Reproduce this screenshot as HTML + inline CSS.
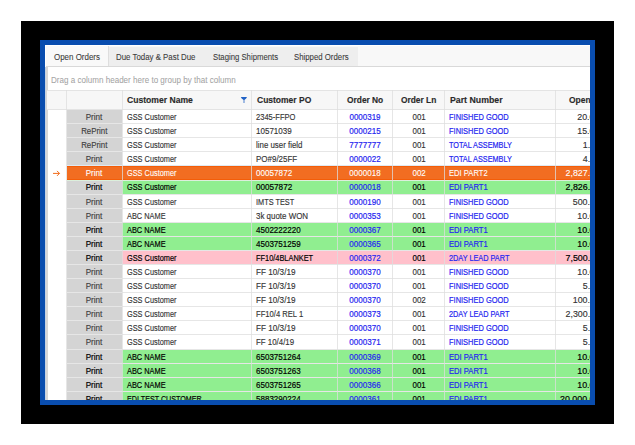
<!DOCTYPE html>
<html><head><meta charset="utf-8"><style>
*{margin:0;padding:0;box-sizing:border-box}
html,body{width:635px;height:445px;background:#fff;overflow:hidden}
body{position:relative;font-family:"Liberation Sans",sans-serif}
#blk{position:absolute;left:21px;top:21px;width:593px;height:403px;background:#000}
#blu{position:absolute;left:40px;top:40px;width:555px;height:365px;background:#094daf}
#ct{position:absolute;left:45px;top:45px;width:545px;height:355px;background:#fff;overflow:hidden}
.a{position:absolute}
.t{position:absolute;white-space:nowrap;font-size:9.75px;line-height:10px}
.s{display:inline-block;transform-origin:0 8px}
.c .s{transform-origin:50% 8px}
.r .s{transform-origin:100% 8px}
.hd{font-weight:bold}
</style></head>
<body><div id="blk"></div><div id="blu"></div><div id="ct">
<div class="a" style="left:1px;top:1px;width:600px;height:20px;background:#f8f8f8"></div>
<div class="a" style="left:1px;top:1px;width:62px;height:20px;background:#f9f9f9"></div>
<div class="a" style="left:63px;top:1px;width:1px;height:20px;background:#dedede"></div>
<div class="a" style="left:64px;top:2px;width:249px;height:19px;background:#eeeeee"></div>
<div class="a" style="left:1px;top:21px;width:600px;height:1px;background:#d9d9d9"></div>
<div class="t " style="left:9px;top:6.5px;color:#3c3c3c;-webkit-text-stroke:0.1px currentColor;"><span class="s" style="transform:scale(0.815,1)">Open Orders</span></div>
<div class="t " style="left:71px;top:6.5px;color:#3c3c3c;-webkit-text-stroke:0.1px currentColor;"><span class="s" style="transform:scale(0.807,1)">Due Today &amp; Past Due</span></div>
<div class="t " style="left:167.5px;top:6.5px;color:#3c3c3c;-webkit-text-stroke:0.1px currentColor;"><span class="s" style="transform:scale(0.795,1)">Staging Shipments</span></div>
<div class="t " style="left:249px;top:6.5px;color:#3c3c3c;-webkit-text-stroke:0.1px currentColor;"><span class="s" style="transform:scale(0.800,1)">Shipped Orders</span></div>
<div class="a" style="left:0px;top:22px;width:1px;height:340px;background:#c4d2e4"></div>
<div class="a" style="left:1px;top:22px;width:2px;height:340px;background:#d6d6d6"></div>
<div class="t " style="left:6px;top:29.5px;color:#a4a4a4;-webkit-text-stroke:0.05px currentColor;"><span class="s" style="transform:scale(0.827,1)">Drag a column header here to group by that column</span></div>
<div class="a" style="left:2px;top:45px;width:600px;height:1px;background:#e4e4e4"></div>
<div class="a" style="left:2px;top:46px;width:600px;height:18px;background:#f7f7f7"></div>
<div class="a" style="left:2px;top:64px;width:600px;height:1px;background:#e4e4e4"></div>
<div class="t hd" style="left:82px;top:50px;color:#2a2a2a;-webkit-text-stroke:0.15px currentColor;"><span class="s" style="transform:scale(0.881,1)">Customer Name</span></div>
<div class="t hd" style="left:211.5px;top:50px;color:#2a2a2a;-webkit-text-stroke:0.15px currentColor;"><span class="s" style="transform:scale(0.871,1)">Customer PO</span></div>
<div class="t c hd" style="left:293px;top:50px;width:55px;text-align:center;color:#2a2a2a;-webkit-text-stroke:0.15px currentColor;"><span class="s" style="transform:scale(0.856,1)">Order No</span></div>
<div class="t c hd" style="left:348px;top:50px;width:52px;text-align:center;color:#2a2a2a;-webkit-text-stroke:0.15px currentColor;"><span class="s" style="transform:scale(0.860,1)">Order Ln</span></div>
<div class="t hd" style="left:404.5px;top:50px;color:#2a2a2a;-webkit-text-stroke:0.15px currentColor;"><span class="s" style="transform:scale(0.898,1)">Part Number</span></div>
<div class="t hd" style="left:524px;top:50px;color:#2a2a2a;-webkit-text-stroke:0.15px currentColor;"><span class="s" style="transform:scale(0.868,1)">Open Qty</span></div>
<svg class="a" style="left:195px;top:51px" width="8" height="8" viewBox="0 0 8 8"><path d="M0.8 1 H7 Q6.6 2.6 4.4 3.9 V7 H3.6 V3.9 Q1.2 2.6 0.8 1 Z" fill="#2263c6"/></svg>
<div class="a" style="left:22px;top:65px;width:55px;height:13px;background:#d4d4d4"></div>
<div class="a" style="left:22px;top:78px;width:600px;height:1px;background:#e6e6e6"></div>
<div class="t c " style="left:22px;top:66.5px;width:55px;text-align:center;color:#3c3c3c;-webkit-text-stroke:0.15px currentColor;"><span class="s" style="transform:scale(0.829,1)">Print</span></div>
<div class="t " style="left:82px;top:66.5px;color:#333333;-webkit-text-stroke:0.15px currentColor;"><span class="s" style="transform:scale(0.754,1)">GSS Customer</span></div>
<div class="t " style="left:210.8px;top:66.5px;color:#333333;-webkit-text-stroke:0.15px currentColor;"><span class="s" style="transform:scale(0.774,1)">2345-FFPO</span></div>
<div class="t c " style="left:292px;top:66.5px;width:55px;text-align:center;color:#2626f0;-webkit-text-stroke:0.22px currentColor;"><span class="s" style="transform:scale(0.817,1)">0000319</span></div>
<div class="t c " style="left:348px;top:66.5px;width:52px;text-align:center;color:#333333;-webkit-text-stroke:0.15px currentColor;"><span class="s" style="transform:scale(0.810,1)">001</span></div>
<div class="t " style="left:403.7px;top:66.5px;color:#2626f0;-webkit-text-stroke:0.22px currentColor;"><span class="s" style="transform:scale(0.766,1)">FINISHED GOOD</span></div>
<div class="t r val" style="left:494.5px;top:66.5px;width:60px;text-align:right;color:#333333;-webkit-text-stroke:0.15px currentColor;"><span class="s" style="transform:scale(0.907,1)">20.00</span></div>
<div class="a" style="left:22px;top:79px;width:55px;height:13px;background:#d4d4d4"></div>
<div class="a" style="left:22px;top:92px;width:600px;height:1px;background:#e6e6e6"></div>
<div class="t c " style="left:22px;top:80.5px;width:55px;text-align:center;color:#3c3c3c;-webkit-text-stroke:0.15px currentColor;"><span class="s" style="transform:scale(0.807,1)">RePrint</span></div>
<div class="t " style="left:82px;top:80.5px;color:#333333;-webkit-text-stroke:0.15px currentColor;"><span class="s" style="transform:scale(0.754,1)">GSS Customer</span></div>
<div class="t " style="left:210.8px;top:80.5px;color:#333333;-webkit-text-stroke:0.15px currentColor;"><span class="s" style="transform:scale(0.824,1)">10571039</span></div>
<div class="t c " style="left:292px;top:80.5px;width:55px;text-align:center;color:#2626f0;-webkit-text-stroke:0.22px currentColor;"><span class="s" style="transform:scale(0.824,1)">0000215</span></div>
<div class="t c " style="left:348px;top:80.5px;width:52px;text-align:center;color:#333333;-webkit-text-stroke:0.15px currentColor;"><span class="s" style="transform:scale(0.810,1)">001</span></div>
<div class="t " style="left:403.7px;top:80.5px;color:#2626f0;-webkit-text-stroke:0.22px currentColor;"><span class="s" style="transform:scale(0.766,1)">FINISHED GOOD</span></div>
<div class="t r val" style="left:494.5px;top:80.5px;width:60px;text-align:right;color:#333333;-webkit-text-stroke:0.15px currentColor;"><span class="s" style="transform:scale(0.907,1)">15.00</span></div>
<div class="a" style="left:22px;top:93px;width:55px;height:13px;background:#d4d4d4"></div>
<div class="a" style="left:22px;top:106px;width:600px;height:1px;background:#e6e6e6"></div>
<div class="t c " style="left:22px;top:94.5px;width:55px;text-align:center;color:#3c3c3c;-webkit-text-stroke:0.15px currentColor;"><span class="s" style="transform:scale(0.807,1)">RePrint</span></div>
<div class="t " style="left:82px;top:94.5px;color:#333333;-webkit-text-stroke:0.15px currentColor;"><span class="s" style="transform:scale(0.754,1)">GSS Customer</span></div>
<div class="t " style="left:210.8px;top:94.5px;color:#333333;-webkit-text-stroke:0.15px currentColor;"><span class="s" style="transform:scale(0.808,1)">line user field</span></div>
<div class="t c " style="left:292px;top:94.5px;width:55px;text-align:center;color:#2626f0;-webkit-text-stroke:0.22px currentColor;"><span class="s" style="transform:scale(0.824,1)">7777777</span></div>
<div class="t c " style="left:348px;top:94.5px;width:52px;text-align:center;color:#333333;-webkit-text-stroke:0.15px currentColor;"><span class="s" style="transform:scale(0.810,1)">001</span></div>
<div class="t " style="left:403.7px;top:94.5px;color:#2626f0;-webkit-text-stroke:0.22px currentColor;"><span class="s" style="transform:scale(0.746,1)">TOTAL ASSEMBLY</span></div>
<div class="t r val" style="left:494.5px;top:94.5px;width:60px;text-align:right;color:#333333;-webkit-text-stroke:0.15px currentColor;"><span class="s" style="transform:scale(0.907,1)">1.00</span></div>
<div class="a" style="left:22px;top:107px;width:55px;height:13px;background:#d4d4d4"></div>
<div class="a" style="left:22px;top:120px;width:600px;height:1px;background:#e6e6e6"></div>
<div class="t c " style="left:22px;top:108.5px;width:55px;text-align:center;color:#3c3c3c;-webkit-text-stroke:0.15px currentColor;"><span class="s" style="transform:scale(0.829,1)">Print</span></div>
<div class="t " style="left:82px;top:108.5px;color:#333333;-webkit-text-stroke:0.15px currentColor;"><span class="s" style="transform:scale(0.754,1)">GSS Customer</span></div>
<div class="t " style="left:210.8px;top:108.5px;color:#333333;-webkit-text-stroke:0.15px currentColor;"><span class="s" style="transform:scale(0.818,1)">PO#9/25FF</span></div>
<div class="t c " style="left:292px;top:108.5px;width:55px;text-align:center;color:#2626f0;-webkit-text-stroke:0.22px currentColor;"><span class="s" style="transform:scale(0.824,1)">0000022</span></div>
<div class="t c " style="left:348px;top:108.5px;width:52px;text-align:center;color:#333333;-webkit-text-stroke:0.15px currentColor;"><span class="s" style="transform:scale(0.810,1)">001</span></div>
<div class="t " style="left:403.7px;top:108.5px;color:#2626f0;-webkit-text-stroke:0.22px currentColor;"><span class="s" style="transform:scale(0.746,1)">TOTAL ASSEMBLY</span></div>
<div class="t r val" style="left:494.5px;top:108.5px;width:60px;text-align:right;color:#333333;-webkit-text-stroke:0.15px currentColor;"><span class="s" style="transform:scale(0.907,1)">4.00</span></div>
<div class="a" style="left:22px;top:121px;width:55px;height:13px;background:#f26d21"></div>
<div class="a" style="left:77px;top:121px;width:500px;height:13px;background:#f26d21"></div>
<div class="a" style="left:22px;top:134px;width:600px;height:1px;background:#e6e6e6"></div>
<div class="t c " style="left:22px;top:122.5px;width:55px;text-align:center;color:#ffffff;-webkit-text-stroke:0.1px currentColor;"><span class="s" style="transform:scale(0.829,1)">Print</span></div>
<div class="t " style="left:82px;top:122.5px;color:#ffffff;-webkit-text-stroke:0.1px currentColor;"><span class="s" style="transform:scale(0.754,1)">GSS Customer</span></div>
<div class="t " style="left:210.8px;top:122.5px;color:#ffffff;-webkit-text-stroke:0.1px currentColor;"><span class="s" style="transform:scale(0.834,1)">00057872</span></div>
<div class="t c " style="left:292px;top:122.5px;width:55px;text-align:center;color:#ffffff;-webkit-text-stroke:0.1px currentColor;"><span class="s" style="transform:scale(0.824,1)">0000018</span></div>
<div class="t c " style="left:348px;top:122.5px;width:52px;text-align:center;color:#ffffff;-webkit-text-stroke:0.1px currentColor;"><span class="s" style="transform:scale(0.824,1)">002</span></div>
<div class="t " style="left:403.7px;top:122.5px;color:#ffffff;-webkit-text-stroke:0.1px currentColor;"><span class="s" style="transform:scale(0.782,1)">EDI PART2</span></div>
<div class="t r val" style="left:494.5px;top:122.5px;width:60px;text-align:right;color:#ffffff;-webkit-text-stroke:0.1px currentColor;"><span class="s" style="transform:scale(0.907,1)">2,827.00</span></div>
<div class="a" style="left:22px;top:121px;width:600px;height:1px;background:#f45d08"></div>
<div class="a" style="left:22px;top:134px;width:600px;height:1px;background:#f45d08"></div>
<div class="a" style="left:22px;top:120px;width:600px;height:1px;background:#dfeaf3"></div>
<div class="a" style="left:22px;top:135px;width:600px;height:1px;background:#dcefdc"></div>
<svg class="a" style="left:7px;top:124px" width="9" height="8" viewBox="0 0 9 8"><path d="M1 4.4 H7.5 M5 1.9 L7.5 4.4 L5 6.9" stroke="#f0640f" stroke-width="0.95" fill="none"/></svg>
<div class="a" style="left:22px;top:136px;width:55px;height:13px;background:#d4d4d4"></div>
<div class="a" style="left:77px;top:136px;width:500px;height:13px;background:#90ee90"></div>
<div class="a" style="left:22px;top:149px;width:600px;height:1px;background:#e6e6e6"></div>
<div class="t c " style="left:22px;top:136.5px;width:55px;text-align:center;color:#000000;-webkit-text-stroke:0.2px currentColor;"><span class="s" style="transform:scale(0.829,1)">Print</span></div>
<div class="t " style="left:82px;top:136.5px;color:#000000;-webkit-text-stroke:0.2px currentColor;"><span class="s" style="transform:scale(0.754,1)">GSS Customer</span></div>
<div class="t " style="left:210.8px;top:136.5px;color:#000000;-webkit-text-stroke:0.2px currentColor;"><span class="s" style="transform:scale(0.834,1)">00057872</span></div>
<div class="t c " style="left:292px;top:136.5px;width:55px;text-align:center;color:#2626f0;-webkit-text-stroke:0.22px currentColor;"><span class="s" style="transform:scale(0.824,1)">0000018</span></div>
<div class="t c " style="left:348px;top:136.5px;width:52px;text-align:center;color:#000000;-webkit-text-stroke:0.2px currentColor;"><span class="s" style="transform:scale(0.810,1)">001</span></div>
<div class="t " style="left:403.7px;top:136.5px;color:#2626f0;-webkit-text-stroke:0.22px currentColor;"><span class="s" style="transform:scale(0.782,1)">EDI PART1</span></div>
<div class="t r val" style="left:494.5px;top:136.5px;width:60px;text-align:right;color:#000000;-webkit-text-stroke:0.2px currentColor;"><span class="s" style="transform:scale(0.907,1)">2,826.00</span></div>
<div class="a" style="left:22px;top:150px;width:55px;height:13px;background:#d4d4d4"></div>
<div class="a" style="left:22px;top:163px;width:600px;height:1px;background:#e6e6e6"></div>
<div class="t c " style="left:22px;top:151.5px;width:55px;text-align:center;color:#3c3c3c;-webkit-text-stroke:0.15px currentColor;"><span class="s" style="transform:scale(0.829,1)">Print</span></div>
<div class="t " style="left:82px;top:151.5px;color:#333333;-webkit-text-stroke:0.15px currentColor;"><span class="s" style="transform:scale(0.754,1)">GSS Customer</span></div>
<div class="t " style="left:210.8px;top:151.5px;color:#333333;-webkit-text-stroke:0.15px currentColor;"><span class="s" style="transform:scale(0.754,1)">IMTS TEST</span></div>
<div class="t c " style="left:292px;top:151.5px;width:55px;text-align:center;color:#2626f0;-webkit-text-stroke:0.22px currentColor;"><span class="s" style="transform:scale(0.824,1)">0000190</span></div>
<div class="t c " style="left:348px;top:151.5px;width:52px;text-align:center;color:#333333;-webkit-text-stroke:0.15px currentColor;"><span class="s" style="transform:scale(0.810,1)">001</span></div>
<div class="t " style="left:403.7px;top:151.5px;color:#2626f0;-webkit-text-stroke:0.22px currentColor;"><span class="s" style="transform:scale(0.766,1)">FINISHED GOOD</span></div>
<div class="t r val" style="left:494.5px;top:151.5px;width:60px;text-align:right;color:#333333;-webkit-text-stroke:0.15px currentColor;"><span class="s" style="transform:scale(0.907,1)">500.00</span></div>
<div class="a" style="left:22px;top:164px;width:55px;height:13px;background:#d4d4d4"></div>
<div class="a" style="left:22px;top:177px;width:600px;height:1px;background:#e6e6e6"></div>
<div class="t c " style="left:22px;top:165.5px;width:55px;text-align:center;color:#3c3c3c;-webkit-text-stroke:0.15px currentColor;"><span class="s" style="transform:scale(0.829,1)">Print</span></div>
<div class="t " style="left:82px;top:165.5px;color:#333333;-webkit-text-stroke:0.15px currentColor;"><span class="s" style="transform:scale(0.757,1)">ABC NAME</span></div>
<div class="t " style="left:210.8px;top:165.5px;color:#333333;-webkit-text-stroke:0.15px currentColor;"><span class="s" style="transform:scale(0.814,1)">3k quote WON</span></div>
<div class="t c " style="left:292px;top:165.5px;width:55px;text-align:center;color:#2626f0;-webkit-text-stroke:0.22px currentColor;"><span class="s" style="transform:scale(0.824,1)">0000353</span></div>
<div class="t c " style="left:348px;top:165.5px;width:52px;text-align:center;color:#333333;-webkit-text-stroke:0.15px currentColor;"><span class="s" style="transform:scale(0.810,1)">001</span></div>
<div class="t " style="left:403.7px;top:165.5px;color:#2626f0;-webkit-text-stroke:0.22px currentColor;"><span class="s" style="transform:scale(0.766,1)">FINISHED GOOD</span></div>
<div class="t r val" style="left:494.5px;top:165.5px;width:60px;text-align:right;color:#333333;-webkit-text-stroke:0.15px currentColor;"><span class="s" style="transform:scale(0.907,1)">10.00</span></div>
<div class="a" style="left:22px;top:178px;width:55px;height:13px;background:#d4d4d4"></div>
<div class="a" style="left:77px;top:178px;width:500px;height:13px;background:#90ee90"></div>
<div class="a" style="left:22px;top:191px;width:600px;height:1px;background:#e6e6e6"></div>
<div class="t c " style="left:22px;top:179.5px;width:55px;text-align:center;color:#000000;-webkit-text-stroke:0.2px currentColor;"><span class="s" style="transform:scale(0.829,1)">Print</span></div>
<div class="t " style="left:82px;top:179.5px;color:#000000;-webkit-text-stroke:0.2px currentColor;"><span class="s" style="transform:scale(0.757,1)">ABC NAME</span></div>
<div class="t " style="left:210.8px;top:179.5px;color:#000000;-webkit-text-stroke:0.2px currentColor;"><span class="s" style="transform:scale(0.824,1)">4502222220</span></div>
<div class="t c " style="left:292px;top:179.5px;width:55px;text-align:center;color:#2626f0;-webkit-text-stroke:0.22px currentColor;"><span class="s" style="transform:scale(0.824,1)">0000367</span></div>
<div class="t c " style="left:348px;top:179.5px;width:52px;text-align:center;color:#000000;-webkit-text-stroke:0.2px currentColor;"><span class="s" style="transform:scale(0.810,1)">001</span></div>
<div class="t " style="left:403.7px;top:179.5px;color:#2626f0;-webkit-text-stroke:0.22px currentColor;"><span class="s" style="transform:scale(0.782,1)">EDI PART1</span></div>
<div class="t r val" style="left:494.5px;top:179.5px;width:60px;text-align:right;color:#000000;-webkit-text-stroke:0.2px currentColor;"><span class="s" style="transform:scale(0.907,1)">10.00</span></div>
<div class="a" style="left:22px;top:192px;width:55px;height:13px;background:#d4d4d4"></div>
<div class="a" style="left:77px;top:192px;width:500px;height:13px;background:#90ee90"></div>
<div class="a" style="left:22px;top:205px;width:600px;height:1px;background:#e6e6e6"></div>
<div class="t c " style="left:22px;top:193.5px;width:55px;text-align:center;color:#000000;-webkit-text-stroke:0.2px currentColor;"><span class="s" style="transform:scale(0.829,1)">Print</span></div>
<div class="t " style="left:82px;top:193.5px;color:#000000;-webkit-text-stroke:0.2px currentColor;"><span class="s" style="transform:scale(0.757,1)">ABC NAME</span></div>
<div class="t " style="left:210.8px;top:193.5px;color:#000000;-webkit-text-stroke:0.2px currentColor;"><span class="s" style="transform:scale(0.824,1)">4503751259</span></div>
<div class="t c " style="left:292px;top:193.5px;width:55px;text-align:center;color:#2626f0;-webkit-text-stroke:0.22px currentColor;"><span class="s" style="transform:scale(0.824,1)">0000365</span></div>
<div class="t c " style="left:348px;top:193.5px;width:52px;text-align:center;color:#000000;-webkit-text-stroke:0.2px currentColor;"><span class="s" style="transform:scale(0.810,1)">001</span></div>
<div class="t " style="left:403.7px;top:193.5px;color:#2626f0;-webkit-text-stroke:0.22px currentColor;"><span class="s" style="transform:scale(0.782,1)">EDI PART1</span></div>
<div class="t r val" style="left:494.5px;top:193.5px;width:60px;text-align:right;color:#000000;-webkit-text-stroke:0.2px currentColor;"><span class="s" style="transform:scale(0.907,1)">10.00</span></div>
<div class="a" style="left:22px;top:206px;width:55px;height:13px;background:#d4d4d4"></div>
<div class="a" style="left:77px;top:206px;width:500px;height:13px;background:#ffc0cb"></div>
<div class="a" style="left:22px;top:219px;width:600px;height:1px;background:#e6e6e6"></div>
<div class="t c " style="left:22px;top:207.5px;width:55px;text-align:center;color:#000000;-webkit-text-stroke:0.2px currentColor;"><span class="s" style="transform:scale(0.829,1)">Print</span></div>
<div class="t " style="left:82px;top:207.5px;color:#000000;-webkit-text-stroke:0.2px currentColor;"><span class="s" style="transform:scale(0.754,1)">GSS Customer</span></div>
<div class="t " style="left:210.8px;top:207.5px;color:#000000;-webkit-text-stroke:0.2px currentColor;"><span class="s" style="transform:scale(0.758,1)">FF10/4BLANKET</span></div>
<div class="t c " style="left:292px;top:207.5px;width:55px;text-align:center;color:#2626f0;-webkit-text-stroke:0.22px currentColor;"><span class="s" style="transform:scale(0.824,1)">0000372</span></div>
<div class="t c " style="left:348px;top:207.5px;width:52px;text-align:center;color:#000000;-webkit-text-stroke:0.2px currentColor;"><span class="s" style="transform:scale(0.810,1)">001</span></div>
<div class="t " style="left:403.7px;top:207.5px;color:#2626f0;-webkit-text-stroke:0.22px currentColor;"><span class="s" style="transform:scale(0.749,1)">2DAY LEAD PART</span></div>
<div class="t r val" style="left:494.5px;top:207.5px;width:60px;text-align:right;color:#000000;-webkit-text-stroke:0.2px currentColor;"><span class="s" style="transform:scale(0.907,1)">7,500.00</span></div>
<div class="a" style="left:22px;top:220px;width:55px;height:13px;background:#d4d4d4"></div>
<div class="a" style="left:22px;top:233px;width:600px;height:1px;background:#e6e6e6"></div>
<div class="t c " style="left:22px;top:221.5px;width:55px;text-align:center;color:#3c3c3c;-webkit-text-stroke:0.15px currentColor;"><span class="s" style="transform:scale(0.829,1)">Print</span></div>
<div class="t " style="left:82px;top:221.5px;color:#333333;-webkit-text-stroke:0.15px currentColor;"><span class="s" style="transform:scale(0.754,1)">GSS Customer</span></div>
<div class="t " style="left:210.8px;top:221.5px;color:#333333;-webkit-text-stroke:0.15px currentColor;"><span class="s" style="transform:scale(0.838,1)">FF 10/3/19</span></div>
<div class="t c " style="left:292px;top:221.5px;width:55px;text-align:center;color:#2626f0;-webkit-text-stroke:0.22px currentColor;"><span class="s" style="transform:scale(0.824,1)">0000370</span></div>
<div class="t c " style="left:348px;top:221.5px;width:52px;text-align:center;color:#333333;-webkit-text-stroke:0.15px currentColor;"><span class="s" style="transform:scale(0.810,1)">001</span></div>
<div class="t " style="left:403.7px;top:221.5px;color:#2626f0;-webkit-text-stroke:0.22px currentColor;"><span class="s" style="transform:scale(0.766,1)">FINISHED GOOD</span></div>
<div class="t r val" style="left:494.5px;top:221.5px;width:60px;text-align:right;color:#333333;-webkit-text-stroke:0.15px currentColor;"><span class="s" style="transform:scale(0.907,1)">10.00</span></div>
<div class="a" style="left:22px;top:234px;width:55px;height:13px;background:#d4d4d4"></div>
<div class="a" style="left:22px;top:247px;width:600px;height:1px;background:#e6e6e6"></div>
<div class="t c " style="left:22px;top:235.5px;width:55px;text-align:center;color:#3c3c3c;-webkit-text-stroke:0.15px currentColor;"><span class="s" style="transform:scale(0.829,1)">Print</span></div>
<div class="t " style="left:82px;top:235.5px;color:#333333;-webkit-text-stroke:0.15px currentColor;"><span class="s" style="transform:scale(0.754,1)">GSS Customer</span></div>
<div class="t " style="left:210.8px;top:235.5px;color:#333333;-webkit-text-stroke:0.15px currentColor;"><span class="s" style="transform:scale(0.838,1)">FF 10/3/19</span></div>
<div class="t c " style="left:292px;top:235.5px;width:55px;text-align:center;color:#2626f0;-webkit-text-stroke:0.22px currentColor;"><span class="s" style="transform:scale(0.824,1)">0000370</span></div>
<div class="t c " style="left:348px;top:235.5px;width:52px;text-align:center;color:#333333;-webkit-text-stroke:0.15px currentColor;"><span class="s" style="transform:scale(0.810,1)">001</span></div>
<div class="t " style="left:403.7px;top:235.5px;color:#2626f0;-webkit-text-stroke:0.22px currentColor;"><span class="s" style="transform:scale(0.766,1)">FINISHED GOOD</span></div>
<div class="t r val" style="left:494.5px;top:235.5px;width:60px;text-align:right;color:#333333;-webkit-text-stroke:0.15px currentColor;"><span class="s" style="transform:scale(0.907,1)">5.00</span></div>
<div class="a" style="left:22px;top:248px;width:55px;height:13px;background:#d4d4d4"></div>
<div class="a" style="left:22px;top:261px;width:600px;height:1px;background:#e6e6e6"></div>
<div class="t c " style="left:22px;top:249.5px;width:55px;text-align:center;color:#3c3c3c;-webkit-text-stroke:0.15px currentColor;"><span class="s" style="transform:scale(0.829,1)">Print</span></div>
<div class="t " style="left:82px;top:249.5px;color:#333333;-webkit-text-stroke:0.15px currentColor;"><span class="s" style="transform:scale(0.754,1)">GSS Customer</span></div>
<div class="t " style="left:210.8px;top:249.5px;color:#333333;-webkit-text-stroke:0.15px currentColor;"><span class="s" style="transform:scale(0.838,1)">FF 10/3/19</span></div>
<div class="t c " style="left:292px;top:249.5px;width:55px;text-align:center;color:#2626f0;-webkit-text-stroke:0.22px currentColor;"><span class="s" style="transform:scale(0.824,1)">0000370</span></div>
<div class="t c " style="left:348px;top:249.5px;width:52px;text-align:center;color:#333333;-webkit-text-stroke:0.15px currentColor;"><span class="s" style="transform:scale(0.824,1)">002</span></div>
<div class="t " style="left:403.7px;top:249.5px;color:#2626f0;-webkit-text-stroke:0.22px currentColor;"><span class="s" style="transform:scale(0.766,1)">FINISHED GOOD</span></div>
<div class="t r val" style="left:494.5px;top:249.5px;width:60px;text-align:right;color:#333333;-webkit-text-stroke:0.15px currentColor;"><span class="s" style="transform:scale(0.907,1)">100.00</span></div>
<div class="a" style="left:22px;top:262px;width:55px;height:13px;background:#d4d4d4"></div>
<div class="a" style="left:22px;top:275px;width:600px;height:1px;background:#e6e6e6"></div>
<div class="t c " style="left:22px;top:263.5px;width:55px;text-align:center;color:#3c3c3c;-webkit-text-stroke:0.15px currentColor;"><span class="s" style="transform:scale(0.829,1)">Print</span></div>
<div class="t " style="left:82px;top:263.5px;color:#333333;-webkit-text-stroke:0.15px currentColor;"><span class="s" style="transform:scale(0.754,1)">GSS Customer</span></div>
<div class="t " style="left:210.8px;top:263.5px;color:#333333;-webkit-text-stroke:0.15px currentColor;"><span class="s" style="transform:scale(0.782,1)">FF10/4 REL 1</span></div>
<div class="t c " style="left:292px;top:263.5px;width:55px;text-align:center;color:#2626f0;-webkit-text-stroke:0.22px currentColor;"><span class="s" style="transform:scale(0.824,1)">0000373</span></div>
<div class="t c " style="left:348px;top:263.5px;width:52px;text-align:center;color:#333333;-webkit-text-stroke:0.15px currentColor;"><span class="s" style="transform:scale(0.810,1)">001</span></div>
<div class="t " style="left:403.7px;top:263.5px;color:#2626f0;-webkit-text-stroke:0.22px currentColor;"><span class="s" style="transform:scale(0.749,1)">2DAY LEAD PART</span></div>
<div class="t r val" style="left:494.5px;top:263.5px;width:60px;text-align:right;color:#333333;-webkit-text-stroke:0.15px currentColor;"><span class="s" style="transform:scale(0.907,1)">2,300.00</span></div>
<div class="a" style="left:22px;top:276px;width:55px;height:13px;background:#d4d4d4"></div>
<div class="a" style="left:22px;top:289px;width:600px;height:1px;background:#e6e6e6"></div>
<div class="t c " style="left:22px;top:277.5px;width:55px;text-align:center;color:#3c3c3c;-webkit-text-stroke:0.15px currentColor;"><span class="s" style="transform:scale(0.829,1)">Print</span></div>
<div class="t " style="left:82px;top:277.5px;color:#333333;-webkit-text-stroke:0.15px currentColor;"><span class="s" style="transform:scale(0.754,1)">GSS Customer</span></div>
<div class="t " style="left:210.8px;top:277.5px;color:#333333;-webkit-text-stroke:0.15px currentColor;"><span class="s" style="transform:scale(0.838,1)">FF 10/3/19</span></div>
<div class="t c " style="left:292px;top:277.5px;width:55px;text-align:center;color:#2626f0;-webkit-text-stroke:0.22px currentColor;"><span class="s" style="transform:scale(0.824,1)">0000370</span></div>
<div class="t c " style="left:348px;top:277.5px;width:52px;text-align:center;color:#333333;-webkit-text-stroke:0.15px currentColor;"><span class="s" style="transform:scale(0.810,1)">001</span></div>
<div class="t " style="left:403.7px;top:277.5px;color:#2626f0;-webkit-text-stroke:0.22px currentColor;"><span class="s" style="transform:scale(0.766,1)">FINISHED GOOD</span></div>
<div class="t r val" style="left:494.5px;top:277.5px;width:60px;text-align:right;color:#333333;-webkit-text-stroke:0.15px currentColor;"><span class="s" style="transform:scale(0.907,1)">5.00</span></div>
<div class="a" style="left:22px;top:290px;width:55px;height:14px;background:#d4d4d4"></div>
<div class="a" style="left:22px;top:304px;width:600px;height:1px;background:#e6e6e6"></div>
<div class="t c " style="left:22px;top:291.5px;width:55px;text-align:center;color:#3c3c3c;-webkit-text-stroke:0.15px currentColor;"><span class="s" style="transform:scale(0.829,1)">Print</span></div>
<div class="t " style="left:82px;top:291.5px;color:#333333;-webkit-text-stroke:0.15px currentColor;"><span class="s" style="transform:scale(0.754,1)">GSS Customer</span></div>
<div class="t " style="left:210.8px;top:291.5px;color:#333333;-webkit-text-stroke:0.15px currentColor;"><span class="s" style="transform:scale(0.809,1)">FF 10/4/19</span></div>
<div class="t c " style="left:292px;top:291.5px;width:55px;text-align:center;color:#2626f0;-webkit-text-stroke:0.22px currentColor;"><span class="s" style="transform:scale(0.824,1)">0000371</span></div>
<div class="t c " style="left:348px;top:291.5px;width:52px;text-align:center;color:#333333;-webkit-text-stroke:0.15px currentColor;"><span class="s" style="transform:scale(0.810,1)">001</span></div>
<div class="t " style="left:403.7px;top:291.5px;color:#2626f0;-webkit-text-stroke:0.22px currentColor;"><span class="s" style="transform:scale(0.766,1)">FINISHED GOOD</span></div>
<div class="t r val" style="left:494.5px;top:291.5px;width:60px;text-align:right;color:#333333;-webkit-text-stroke:0.15px currentColor;"><span class="s" style="transform:scale(0.907,1)">5.00</span></div>
<div class="a" style="left:22px;top:305px;width:55px;height:13px;background:#d4d4d4"></div>
<div class="a" style="left:77px;top:305px;width:500px;height:13px;background:#90ee90"></div>
<div class="a" style="left:22px;top:318px;width:600px;height:1px;background:#e6e6e6"></div>
<div class="t c " style="left:22px;top:306.5px;width:55px;text-align:center;color:#000000;-webkit-text-stroke:0.2px currentColor;"><span class="s" style="transform:scale(0.829,1)">Print</span></div>
<div class="t " style="left:82px;top:306.5px;color:#000000;-webkit-text-stroke:0.2px currentColor;"><span class="s" style="transform:scale(0.757,1)">ABC NAME</span></div>
<div class="t " style="left:210.8px;top:306.5px;color:#000000;-webkit-text-stroke:0.2px currentColor;"><span class="s" style="transform:scale(0.824,1)">6503751264</span></div>
<div class="t c " style="left:292px;top:306.5px;width:55px;text-align:center;color:#2626f0;-webkit-text-stroke:0.22px currentColor;"><span class="s" style="transform:scale(0.824,1)">0000369</span></div>
<div class="t c " style="left:348px;top:306.5px;width:52px;text-align:center;color:#000000;-webkit-text-stroke:0.2px currentColor;"><span class="s" style="transform:scale(0.810,1)">001</span></div>
<div class="t " style="left:403.7px;top:306.5px;color:#2626f0;-webkit-text-stroke:0.22px currentColor;"><span class="s" style="transform:scale(0.782,1)">EDI PART1</span></div>
<div class="t r val" style="left:494.5px;top:306.5px;width:60px;text-align:right;color:#000000;-webkit-text-stroke:0.2px currentColor;"><span class="s" style="transform:scale(0.907,1)">10.00</span></div>
<div class="a" style="left:22px;top:319px;width:55px;height:13px;background:#d4d4d4"></div>
<div class="a" style="left:77px;top:319px;width:500px;height:13px;background:#90ee90"></div>
<div class="a" style="left:22px;top:332px;width:600px;height:1px;background:#e6e6e6"></div>
<div class="t c " style="left:22px;top:320.5px;width:55px;text-align:center;color:#000000;-webkit-text-stroke:0.2px currentColor;"><span class="s" style="transform:scale(0.829,1)">Print</span></div>
<div class="t " style="left:82px;top:320.5px;color:#000000;-webkit-text-stroke:0.2px currentColor;"><span class="s" style="transform:scale(0.757,1)">ABC NAME</span></div>
<div class="t " style="left:210.8px;top:320.5px;color:#000000;-webkit-text-stroke:0.2px currentColor;"><span class="s" style="transform:scale(0.824,1)">6503751263</span></div>
<div class="t c " style="left:292px;top:320.5px;width:55px;text-align:center;color:#2626f0;-webkit-text-stroke:0.22px currentColor;"><span class="s" style="transform:scale(0.824,1)">0000368</span></div>
<div class="t c " style="left:348px;top:320.5px;width:52px;text-align:center;color:#000000;-webkit-text-stroke:0.2px currentColor;"><span class="s" style="transform:scale(0.810,1)">001</span></div>
<div class="t " style="left:403.7px;top:320.5px;color:#2626f0;-webkit-text-stroke:0.22px currentColor;"><span class="s" style="transform:scale(0.782,1)">EDI PART1</span></div>
<div class="t r val" style="left:494.5px;top:320.5px;width:60px;text-align:right;color:#000000;-webkit-text-stroke:0.2px currentColor;"><span class="s" style="transform:scale(0.907,1)">10.00</span></div>
<div class="a" style="left:22px;top:333px;width:55px;height:13px;background:#d4d4d4"></div>
<div class="a" style="left:77px;top:333px;width:500px;height:13px;background:#90ee90"></div>
<div class="a" style="left:22px;top:346px;width:600px;height:1px;background:#e6e6e6"></div>
<div class="t c " style="left:22px;top:334.5px;width:55px;text-align:center;color:#000000;-webkit-text-stroke:0.2px currentColor;"><span class="s" style="transform:scale(0.829,1)">Print</span></div>
<div class="t " style="left:82px;top:334.5px;color:#000000;-webkit-text-stroke:0.2px currentColor;"><span class="s" style="transform:scale(0.757,1)">ABC NAME</span></div>
<div class="t " style="left:210.8px;top:334.5px;color:#000000;-webkit-text-stroke:0.2px currentColor;"><span class="s" style="transform:scale(0.824,1)">6503751265</span></div>
<div class="t c " style="left:292px;top:334.5px;width:55px;text-align:center;color:#2626f0;-webkit-text-stroke:0.22px currentColor;"><span class="s" style="transform:scale(0.824,1)">0000366</span></div>
<div class="t c " style="left:348px;top:334.5px;width:52px;text-align:center;color:#000000;-webkit-text-stroke:0.2px currentColor;"><span class="s" style="transform:scale(0.810,1)">001</span></div>
<div class="t " style="left:403.7px;top:334.5px;color:#2626f0;-webkit-text-stroke:0.22px currentColor;"><span class="s" style="transform:scale(0.782,1)">EDI PART1</span></div>
<div class="t r val" style="left:494.5px;top:334.5px;width:60px;text-align:right;color:#000000;-webkit-text-stroke:0.2px currentColor;"><span class="s" style="transform:scale(0.907,1)">10.00</span></div>
<div class="a" style="left:22px;top:347px;width:55px;height:13px;background:#d4d4d4"></div>
<div class="a" style="left:77px;top:347px;width:500px;height:13px;background:#90ee90"></div>
<div class="a" style="left:22px;top:360px;width:600px;height:1px;background:#e6e6e6"></div>
<div class="t c " style="left:22px;top:348.5px;width:55px;text-align:center;color:#000000;-webkit-text-stroke:0.2px currentColor;"><span class="s" style="transform:scale(0.829,1)">Print</span></div>
<div class="t " style="left:82px;top:348.5px;color:#000000;-webkit-text-stroke:0.2px currentColor;"><span class="s" style="transform:scale(0.734,1)">EDI TEST CUSTOMER</span></div>
<div class="t " style="left:210.8px;top:348.5px;color:#000000;-webkit-text-stroke:0.2px currentColor;"><span class="s" style="transform:scale(0.824,1)">5883290224</span></div>
<div class="t c " style="left:292px;top:348.5px;width:55px;text-align:center;color:#2626f0;-webkit-text-stroke:0.22px currentColor;"><span class="s" style="transform:scale(0.824,1)">0000361</span></div>
<div class="t c " style="left:348px;top:348.5px;width:52px;text-align:center;color:#000000;-webkit-text-stroke:0.2px currentColor;"><span class="s" style="transform:scale(0.810,1)">001</span></div>
<div class="t " style="left:403.7px;top:348.5px;color:#2626f0;-webkit-text-stroke:0.22px currentColor;"><span class="s" style="transform:scale(0.782,1)">EDI PART1</span></div>
<div class="t r val" style="left:494.5px;top:348.5px;width:60px;text-align:right;color:#000000;-webkit-text-stroke:0.2px currentColor;"><span class="s" style="transform:scale(0.907,1)">20,000.00</span></div>
<div class="a" style="left:21px;top:45px;width:1px;height:320px;background:rgba(222,222,222,.75)"></div>
<div class="a" style="left:77px;top:45px;width:1px;height:320px;background:rgba(222,222,222,.75)"></div>
<div class="a" style="left:206px;top:45px;width:1px;height:320px;background:rgba(222,222,222,.75)"></div>
<div class="a" style="left:292px;top:45px;width:1px;height:320px;background:rgba(222,222,222,.75)"></div>
<div class="a" style="left:347px;top:45px;width:1px;height:320px;background:rgba(222,222,222,.75)"></div>
<div class="a" style="left:399px;top:45px;width:1px;height:320px;background:rgba(222,222,222,.75)"></div>
<div class="a" style="left:510px;top:45px;width:1px;height:320px;background:rgba(222,222,222,.75)"></div>
</div></body></html>
